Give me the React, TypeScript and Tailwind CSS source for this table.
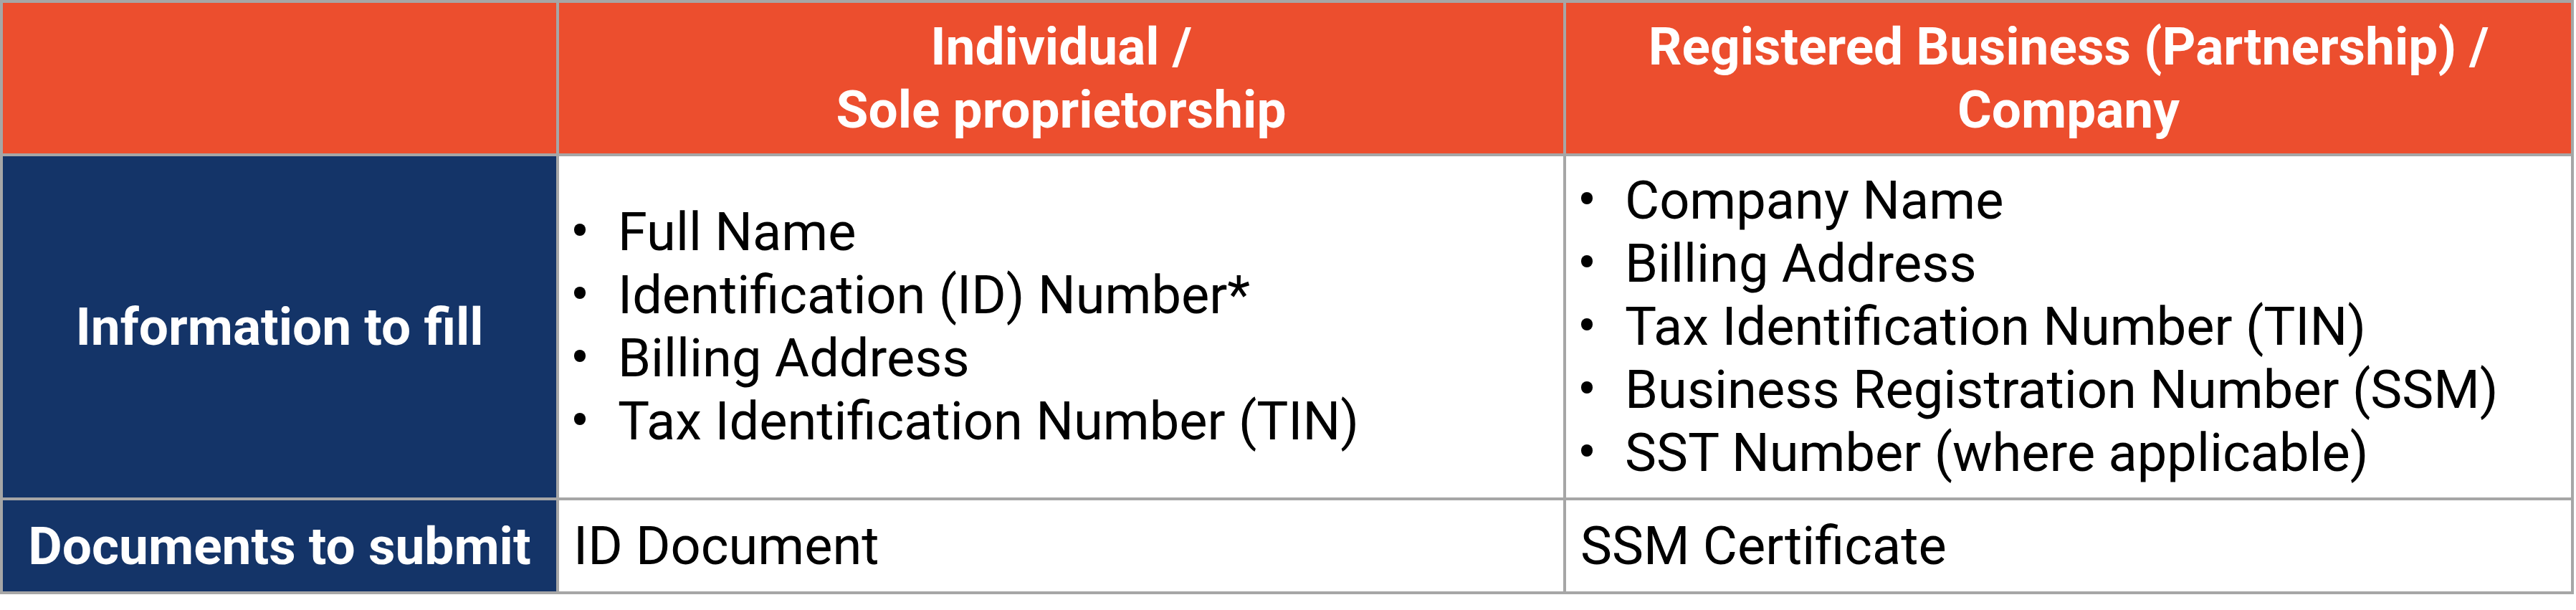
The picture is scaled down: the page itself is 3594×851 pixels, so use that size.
const individualInfo = [
  'Full Name',
  'Identification (ID) Number*',
  'Billing Address',
  'Tax Identification Number (TIN)',
]

const companyInfo = [
  'Company Name',
  'Billing Address',
  'Tax Identification Number (TIN)',
  'Business Registration Number (SSM)',
  'SST Number (where applicable)',
]

const BulletList = ({ items }: { items: string[] }) => (
  <ul className="flex flex-col">
    {items.map((item) => (
      <li key={item} className="whitespace-nowrap">
        <span className="mr-[45px] ml-[1px] inline-block h-[17px] w-[16px] rounded-full bg-black align-[20px]" />
        {item}
      </li>
    ))}
  </ul>
)

const App = () => {
  return (
    <div className="min-h-screen w-full bg-white font-['Roboto',sans-serif] text-[74px] leading-[88px] text-black">
      <div className="grid w-[3591px] grid-cols-[772px_1401px_1402px] grid-rows-[210px_476px_127px] gap-[4px] bg-[#a6a6a6] p-[4px]">
        {/* Header */}
        <div className="bg-[#ec4e2e]" />
        <div className="flex items-center justify-center bg-[#ec4e2e] text-center text-[73px] font-bold text-white">
          <p>
            Individual /<br />
            Sole proprietorship
          </p>
        </div>
        <div className="flex items-center justify-center bg-[#ec4e2e] text-center text-[73px] font-bold text-white">
          <p>
            Registered Business (Partnership) /<br />
            Company
          </p>
        </div>

        {/* Information row */}
        <div className="flex items-center justify-center bg-[#143468] text-center text-[73px] font-bold text-white">
          Information to fill
        </div>
        <div className="flex items-center bg-white pl-[20px]">
          <BulletList items={individualInfo} />
        </div>
        <div className="flex items-center bg-white pl-[20px]">
          <BulletList items={companyInfo} />
        </div>

        {/* Documents row */}
        <div className="flex items-center justify-center whitespace-nowrap bg-[#143468] text-center text-[73px] font-bold text-white">
          Documents to submit
        </div>
        <div className="flex items-center bg-white pl-[20px]">ID Document</div>
        <div className="flex items-center bg-white pl-[20px]">SSM Certificate</div>
      </div>
    </div>
  )
}

export default App
